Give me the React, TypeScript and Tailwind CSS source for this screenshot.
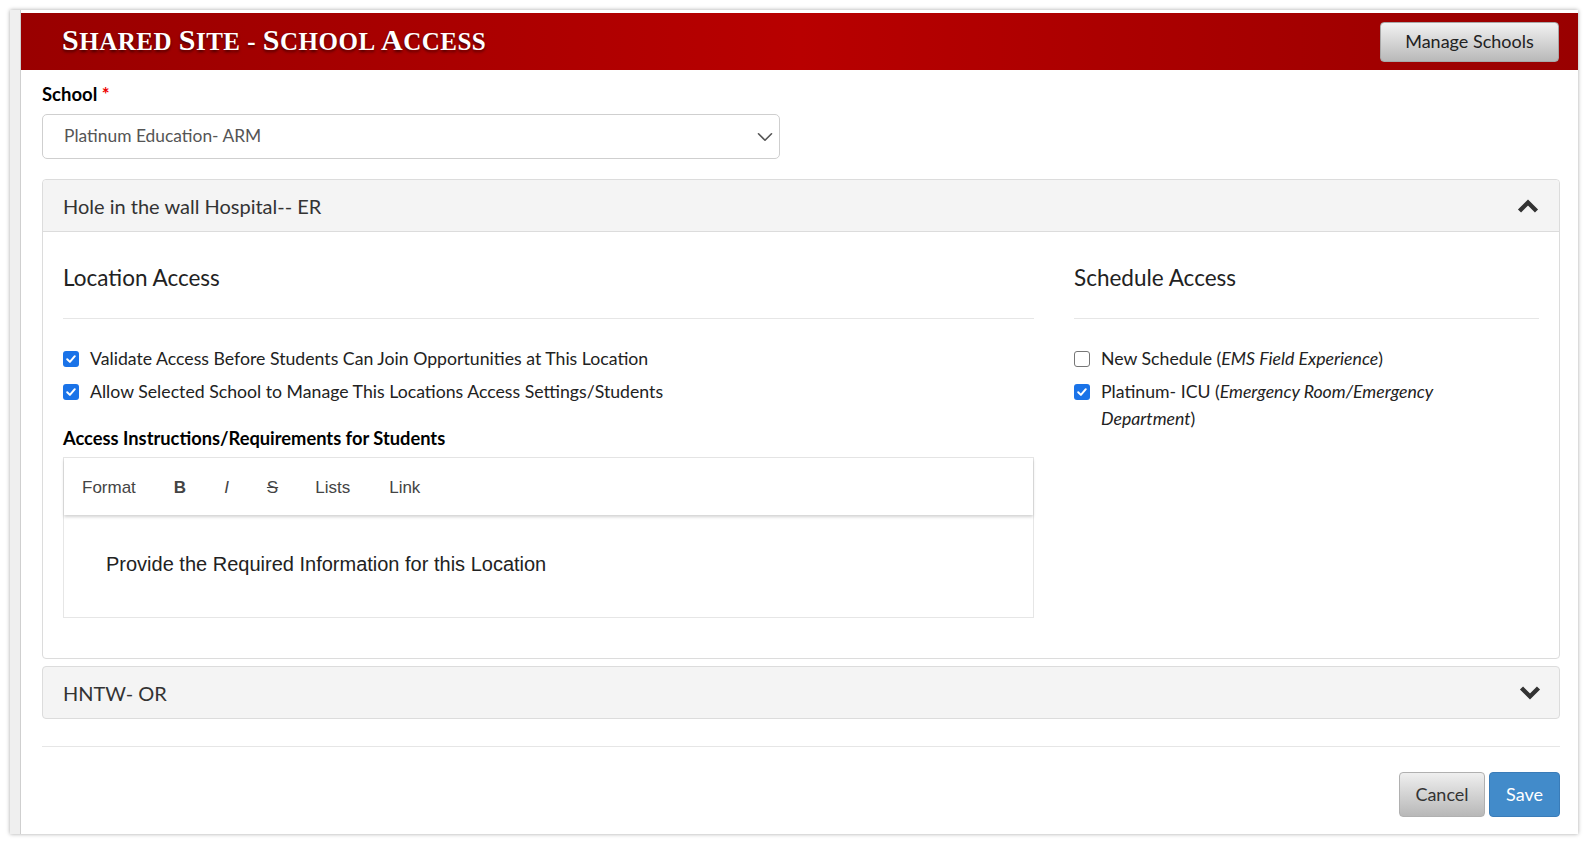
import React from 'react';
import { ChevronDown } from 'lucide-react';

const body = { fontFamily: 'Lato, "Noto Sans", sans-serif' };

function Box({ checked }: { checked: boolean }) {
  if (!checked) {
    return <span className="inline-block w-[16px] h-[16px] rounded-[3px] border border-[#767676] bg-white shrink-0" />;
  }
  return (
    <span className="inline-flex items-center justify-center w-[16px] h-[16px] rounded-[3px] bg-[#1a73e8] shrink-0">
      <svg viewBox="0 0 12 12" className="w-[12px] h-[12px]">
        <path d="M2.2 6.3 L4.9 8.9 L9.8 3.2" fill="none" stroke="white" strokeWidth="2" strokeLinecap="round" strokeLinejoin="round" />
      </svg>
    </span>
  );
}

function Chevron({ up }: { up?: boolean }) {
  return (
    <svg viewBox="0 0 22 14" className="w-[22px] h-[14px] text-[#333]">
      <polyline
        points={up ? '2.5,12 11,3.5 19.5,12' : '2.5,2 11,10.5 19.5,2'}
        fill="none"
        stroke="currentColor"
        strokeWidth="4.4"
        strokeLinecap="butt"
        strokeLinejoin="miter"
      />
    </svg>
  );
}

function CheckRow({ checked, children }: { checked: boolean; children: React.ReactNode }) {
  return (
    <div className="flex items-start gap-[11px] py-[3px]">
      <span className="h-[27px] flex items-center">
        <Box checked={checked} />
      </span>
      <span className="text-[17.7px] leading-[27px] text-[#222]">{children}</span>
    </div>
  );
}

function Word({ first, rest }: { first: string; rest: string }) {
  return (
    <span>
      <span className="text-[30px]">{first}</span>
      <span className="text-[25px]">{rest}</span>
    </span>
  );
}

export default function App() {
  return (
    <div className="min-h-screen bg-white p-[10px]" style={body}>
      <div className="flex h-[824px] bg-white shadow-[0_0_4px_rgba(0,0,0,0.35)]">
        <div className="w-[11px] bg-[#efefef] border-r border-[#cfcfcf]" />
        <div className="flex-1 flex flex-col pt-[3px]">
          {/* header */}
          <div className="h-[57px] flex items-center justify-between pl-[41px] pr-[19px] bg-gradient-to-r from-[#990000] via-[#b80000] to-[#990000]">
            <h1
              className="text-white font-bold text-[25px] leading-none pb-[4px] tracking-[0.5px] [text-shadow:0_2px_3px_rgba(0,0,0,0.55)]"
              style={{ fontFamily: '"Liberation Serif", serif' }}
            >
              <Word first="S" rest="HARED" /> <Word first="S" rest="ITE" /> - <Word first="S" rest="CHOOL" />{' '}
              <Word first="A" rest="CCESS" />
            </h1>
            <button className="h-[40px] w-[179px] rounded-[4px] bg-gradient-to-b from-[#f2f2f2] to-[#b9b9b9] border border-[#a8a8a8] text-[18px] text-[#222]">
              Manage Schools
            </button>
          </div>

          <div className="pl-[21px] pr-[18px] pt-[14px] flex-1 flex flex-col">
            {/* school select */}
            <label className="text-[18.5px] font-bold text-black leading-[20px]">
              School <span className="text-[#e00]">*</span>
            </label>
            <div className="mt-[10px] w-[738px] h-[45px] rounded-[5px] border border-[#cfcfcf] flex items-center justify-between pl-[21px] pr-[1px]">
              <span className="text-[17.4px] text-[#555]">Platinum Education- ARM</span>
              <ChevronDown className="w-[26px] h-[26px] text-[#555]" strokeWidth={1.5} />
            </div>

            {/* accordion 1 */}
            <div className="mt-[20px] border border-[#dcdcdc] rounded-[4px]">
              <div className="h-[52px] bg-[#f4f4f4] border-b border-[#dcdcdc] flex items-center justify-between pl-[20px] pr-[20px] rounded-t-[4px]">
                <span className="text-[20px] text-[#333]">Hole in the wall Hospital-- ER</span>
                <Chevron up />
              </div>
              <div className="grid grid-cols-[1fr_465px] gap-[40px] px-5 pt-[31px] pb-[40px]">
                <div>
                  <h3 className="text-[22.5px] text-[#222] leading-[30px] pb-[25px] border-b border-[#e6e6e6]">Location Access</h3>
                  <div className="mt-[23px]">
                    <CheckRow checked>Validate Access Before Students Can Join Opportunities at This Location</CheckRow>
                    <CheckRow checked>Allow Selected School to Manage This Locations Access Settings/Students</CheckRow>
                  </div>
                  <div className="mt-[19px] text-[18.3px] font-bold text-black leading-[22px]">
                    Access Instructions/Requirements for Students
                  </div>
                  <div className="mt-[8px] border border-[#e6e6e6]" style={{ fontFamily: '"Liberation Sans", Arial, sans-serif' }}>
                    <div className="h-[57px] pt-[2px] flex items-center bg-white shadow-[0_2px_3px_rgba(0,0,0,0.18)] text-[17px] text-[#444]">
                      <span className="ml-[18px]">Format</span>
                      <span className="ml-[38px] font-bold">B</span>
                      <span className="ml-[38px] italic">I</span>
                      <span className="ml-[38px] line-through">S</span>
                      <span className="ml-[37px]">Lists</span>
                      <span className="ml-[39px]">Link</span>
                    </div>
                    <div className="h-[102px] pl-[42px] pt-[37px] text-[20px] leading-[24px] text-[#222]">
                      Provide the Required Information for this Location
                    </div>
                  </div>
                </div>
                <div>
                  <h3 className="text-[22.5px] text-[#222] leading-[30px] pb-[25px] border-b border-[#e6e6e6]">Schedule Access</h3>
                  <div className="mt-[23px] max-w-[385px]">
                    <CheckRow checked={false}>
                      New Schedule (<i>EMS Field Experience</i>)
                    </CheckRow>
                    <CheckRow checked>
                      Platinum- ICU (<i>Emergency Room/Emergency Department</i>)
                    </CheckRow>
                  </div>
                </div>
              </div>
            </div>

            {/* accordion 2 */}
            <div className="mt-[7px] h-[53px] bg-[#f4f4f4] border border-[#dcdcdc] rounded-[4px] flex items-center justify-between pl-[20px] pr-[18px]">
              <span className="text-[20px] text-[#333]">HNTW- OR</span>
              <Chevron />
            </div>

            <div className="mt-[27px] border-t border-[#e6e6e6]" />

            <div className="mt-[25px] flex justify-end gap-[4px]">
              <button className="h-[45px] w-[86px] rounded-[4px] bg-gradient-to-b from-[#efefef] to-[#b8b8b8] border border-[#b0b0b0] text-[18px] text-[#333]">
                Cancel
              </button>
              <button className="h-[45px] w-[71px] rounded-[4px] bg-[#428bca] border border-[#3a7cb8] text-[18px] text-white">
                Save
              </button>
            </div>
          </div>
        </div>
      </div>
    </div>
  );
}
